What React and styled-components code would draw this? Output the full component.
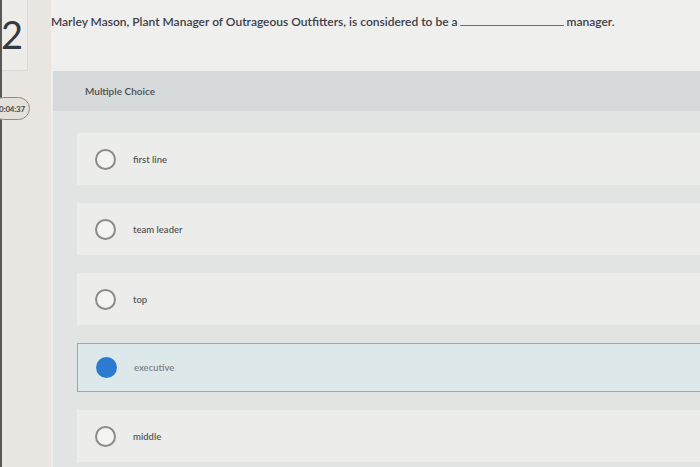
import React from 'react'
import styled, { createGlobalStyle } from 'styled-components'

const GlobalStyle = createGlobalStyle`
  html, body {
    margin: 0;
    padding: 0;
    background: #eeeeec;
  }
  body {
    font-family: Lato, "Open Sans", "Liberation Sans", sans-serif;
    overflow: hidden;
  }
`

const options = [
  { id: 'a', label: 'first line' },
  { id: 'b', label: 'team leader' },
  { id: 'c', label: 'top' },
  { id: 'd', label: 'executive', selected: true },
  { id: 'e', label: 'middle' },
]

const Page = styled.div`
  display: flex;
  width: 700px;
  height: 467px;
  overflow: hidden;
`

const Sidebar = styled.aside`
  width: 49px;
  flex-shrink: 0;
  border-left: 2px solid #5a5854;
  background: #e9e6e1;
  display: flex;
  flex-direction: column;
`

const NumberCard = styled.div`
  width: 26px;
  height: 71px;
  box-sizing: border-box;
  background: #eeece8;
  border-right: 1px solid #dcdad5;
  border-bottom: 1px solid #dcdad5;
  border-bottom-right-radius: 3px;
  overflow: hidden;
`

const Number = styled.div`
  margin: 15px 0 0 -1px;
  font-family: Lato, "Liberation Sans", sans-serif;
  font-size: 38px;
  font-weight: 400;
  line-height: 1;
  color: #333a44;
`

const Timer = styled.div`
  margin: 26px 0 0 -10px;
  width: 38px;
  height: 23px;
  box-sizing: border-box;
  border: 1.5px solid #8d8c84;
  border-radius: 12px;
  background: #e3e1da;
  display: flex;
  align-items: center;
  justify-content: flex-end;
  padding-right: 4px;
  font-size: 8px;
  font-weight: 700;
  color: #4a4a46;
  letter-spacing: -0.2px;
`

const Main = styled.main`
  flex: 1;
  display: flex;
  flex-direction: column;
  min-width: 0;
`

const Question = styled.div`
  height: 71px;
  box-sizing: border-box;
  padding: 14px 0 0 0;
  font-size: 12px;
  font-weight: 600;
  color: #3b4048;
  white-space: nowrap;
  background: #efefed;
`

const Blank = styled.span`
  display: inline-block;
  width: 104px;
  margin: 0 3px 0 2px;
  border-bottom: 1px solid #6b6e72;
  vertical-align: baseline;
`

const Panel = styled.section`
  flex: 1;
  margin-left: 2px;
  background: #e2e4e3;
  display: flex;
  flex-direction: column;
`

const PanelHeader = styled.div`
  height: 40px;
  box-sizing: border-box;
  padding: 14px 0 0 32px;
  background: #d7dada;
  font-size: 10px;
  font-weight: 600;
  color: #4a4e52;
`

const OptionList = styled.div`
  display: flex;
  flex-direction: column;
  gap: 18px;
  padding: 22px 0 0 24px;
`

const Option = styled.label`
  display: flex;
  align-items: center;
  height: ${(p) => (p.$selected ? '49px' : '52px')};
  box-sizing: border-box;
  padding-left: 18px;
  background: ${(p) => (p.$selected ? '#dde8eb' : '#ecedeb')};
  border: ${(p) => (p.$selected ? '1px solid #9aa6ab' : 'none')};
  border-right: none;
  cursor: pointer;
`

const Radio = styled.span`
  width: 21px;
  height: 21px;
  box-sizing: border-box;
  border-radius: 50%;
  border: ${(p) => (p.$selected ? 'none' : '2px solid #8a8b8b')};
  background: ${(p) => (p.$selected ? '#2c7bd3' : '#f3f3f1')};
  flex-shrink: 0;
`

const Label = styled.span`
  margin-left: 17px;
  font-size: 9.5px;
  font-weight: 600;
  color: ${(p) => (p.$selected ? '#7d8488' : '#55585b')};
`

export default function App() {
  return (
    <>
      <GlobalStyle />
      <Page>
        <Sidebar>
          <NumberCard>
            <Number>2</Number>
          </NumberCard>
          <Timer>0:04:37</Timer>
        </Sidebar>
        <Main>
          <Question>
            Marley Mason, Plant Manager of Outrageous Outfitters, is considered to be a
            <Blank />
            manager.
          </Question>
          <Panel>
            <PanelHeader>Multiple Choice</PanelHeader>
            <OptionList>
              {options.map((o) => (
                <Option key={o.id} $selected={o.selected}>
                  <Radio $selected={o.selected} />
                  <Label $selected={o.selected}>{o.label}</Label>
                </Option>
              ))}
            </OptionList>
          </Panel>
        </Main>
      </Page>
    </>
  )
}
